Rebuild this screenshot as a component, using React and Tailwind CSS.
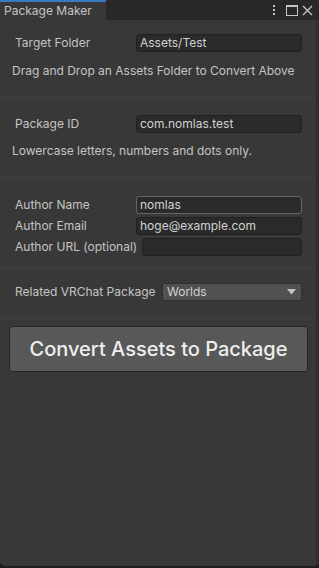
import React from "react";

function Field({ value, hover = false }) {
  return (
    <div
      className={`h-[18px] flex-1 rounded-[3px] border bg-[#2a2a2a] pl-[3px] text-[12px] leading-[16px] text-[#d2d2d2] ${hover ? "border-[#656565]" : "border-[#212121]"}`}
    >
      {value}
    </div>
  );
}

function Row({ label, value, labelW = "w-[136px]", hover }) {
  return (
    <div className="flex items-center h-[18px]">
      <div className={`${labelW} pl-[15px] shrink-0 text-[12px] leading-[16px] text-[#c4c4c4] whitespace-nowrap`}>{label}</div>
      <Field value={value} hover={hover} />
    </div>
  );
}

export default function App() {
  return (
    <div className="w-[319px] h-[568px] bg-[#1e1e1e] overflow-hidden font-['Inter',sans-serif]">
      <div className="h-[566px] rounded-b-[5px] bg-[#383838] flex flex-col overflow-hidden">
        {/* tab bar */}
        <div className="h-[20px] bg-[#282828] flex shrink-0 rounded-tr-[3px]">
          <div className="w-[106px] bg-[#383838] border-t-2 border-[#3a79bb] pl-[4px] text-[12px] leading-[17px] text-[#c4c4c4]">
            Package Maker
          </div>
          <div className="flex-1" />
          <div className="flex items-center gap-[4px] pr-[6px]">
            <svg width="6" height="12" viewBox="0 0 6 12" className="mr-[5px]">
              <rect x="2" y="1" width="2" height="2" fill="#c4c4c4" />
              <rect x="2" y="5" width="2" height="2" fill="#c4c4c4" />
              <rect x="2" y="9" width="2" height="2" fill="#c4c4c4" />
            </svg>
            <svg width="12" height="11" viewBox="0 0 12 11">
              <rect x="0.5" y="0.5" width="11" height="10" fill="none" stroke="#c4c4c4" />
              <rect x="0" y="0" width="12" height="2" fill="#c4c4c4" />
            </svg>
            <svg width="11" height="11" viewBox="0 0 11 11">
              <path d="M1 1 L10 10 M10 1 L1 10" stroke="#c4c4c4" strokeWidth="1.4" />
            </svg>
          </div>
        </div>

        <div className="flex flex-1">
          <div className="flex-1 flex flex-col pr-[14px]">
            {/* section 1 */}
            <div className="pt-[14px] h-[76px]">
              <Row label="Target Folder" value="Assets/Test" />
              <div className="mt-[11px] pl-[12px] text-[12px] leading-[16px] text-[#c4c4c4] whitespace-nowrap">
                Drag and Drop an Assets Folder to Convert Above
              </div>
            </div>
            <div className="h-[4px] bg-[#3b3b3b] -mr-[14px]" />
            {/* section 2 */}
            <div className="pt-[15px] h-[76px]">
              <Row label="Package ID" value="com.nomlas.test" />
              <div className="mt-[10px] pl-[12px] text-[12px] leading-[16px] text-[#c4c4c4] whitespace-nowrap">
                Lowercase letters, numbers and dots only.
              </div>
            </div>
            <div className="h-[4px] bg-[#3b3b3b] -mr-[14px]" />
            {/* section 3 */}
            <div className="pt-[16px] h-[86px] flex flex-col gap-[3px]">
              <Row label="Author Name" value="nomlas" hover />
              <Row label="Author Email" value="hoge@example.com" />
              <Row label="Author URL (optional)" value="" labelW="w-[142px]" />
            </div>
            <div className="h-[4px] bg-[#3b3b3b] -mr-[14px]" />
            {/* section 4 */}
            <div className="pt-[13px] h-[46px]">
              <div className="flex items-center h-[18px]">
                <div className="w-[162px] pl-[15px] shrink-0 text-[12px] leading-[16px] text-[#c4c4c4] whitespace-nowrap">
                  Related VRChat Package
                </div>
                <div className="h-[18px] flex-1 rounded-[3px] border border-[#303030] bg-[#515151] pl-[4px] pr-[5px] flex items-center justify-between text-[12px] leading-[16px] text-[#d2d2d2]">
                  <span>Worlds</span>
                  <svg width="9" height="6" viewBox="0 0 9 6">
                    <path d="M0 0 H9 L4.5 5.5 Z" fill="#c4c4c4" />
                  </svg>
                </div>
              </div>
            </div>
            <div className="h-[4px] bg-[#3b3b3b] -mr-[14px]" />
            {/* button */}
            <div className="pt-[6px] pl-[9px] -mr-[6px]">
              <div className="h-[46px] rounded-[3px] border border-[#262626] bg-[#585858] flex items-center justify-center text-[20px] font-medium text-[#eeeeee]">
                Convert Assets to Package
              </div>
            </div>
          </div>
          <div className="w-[3px] bg-[#2f2f2f]" />
        </div>
      </div>
    </div>
  );
}
